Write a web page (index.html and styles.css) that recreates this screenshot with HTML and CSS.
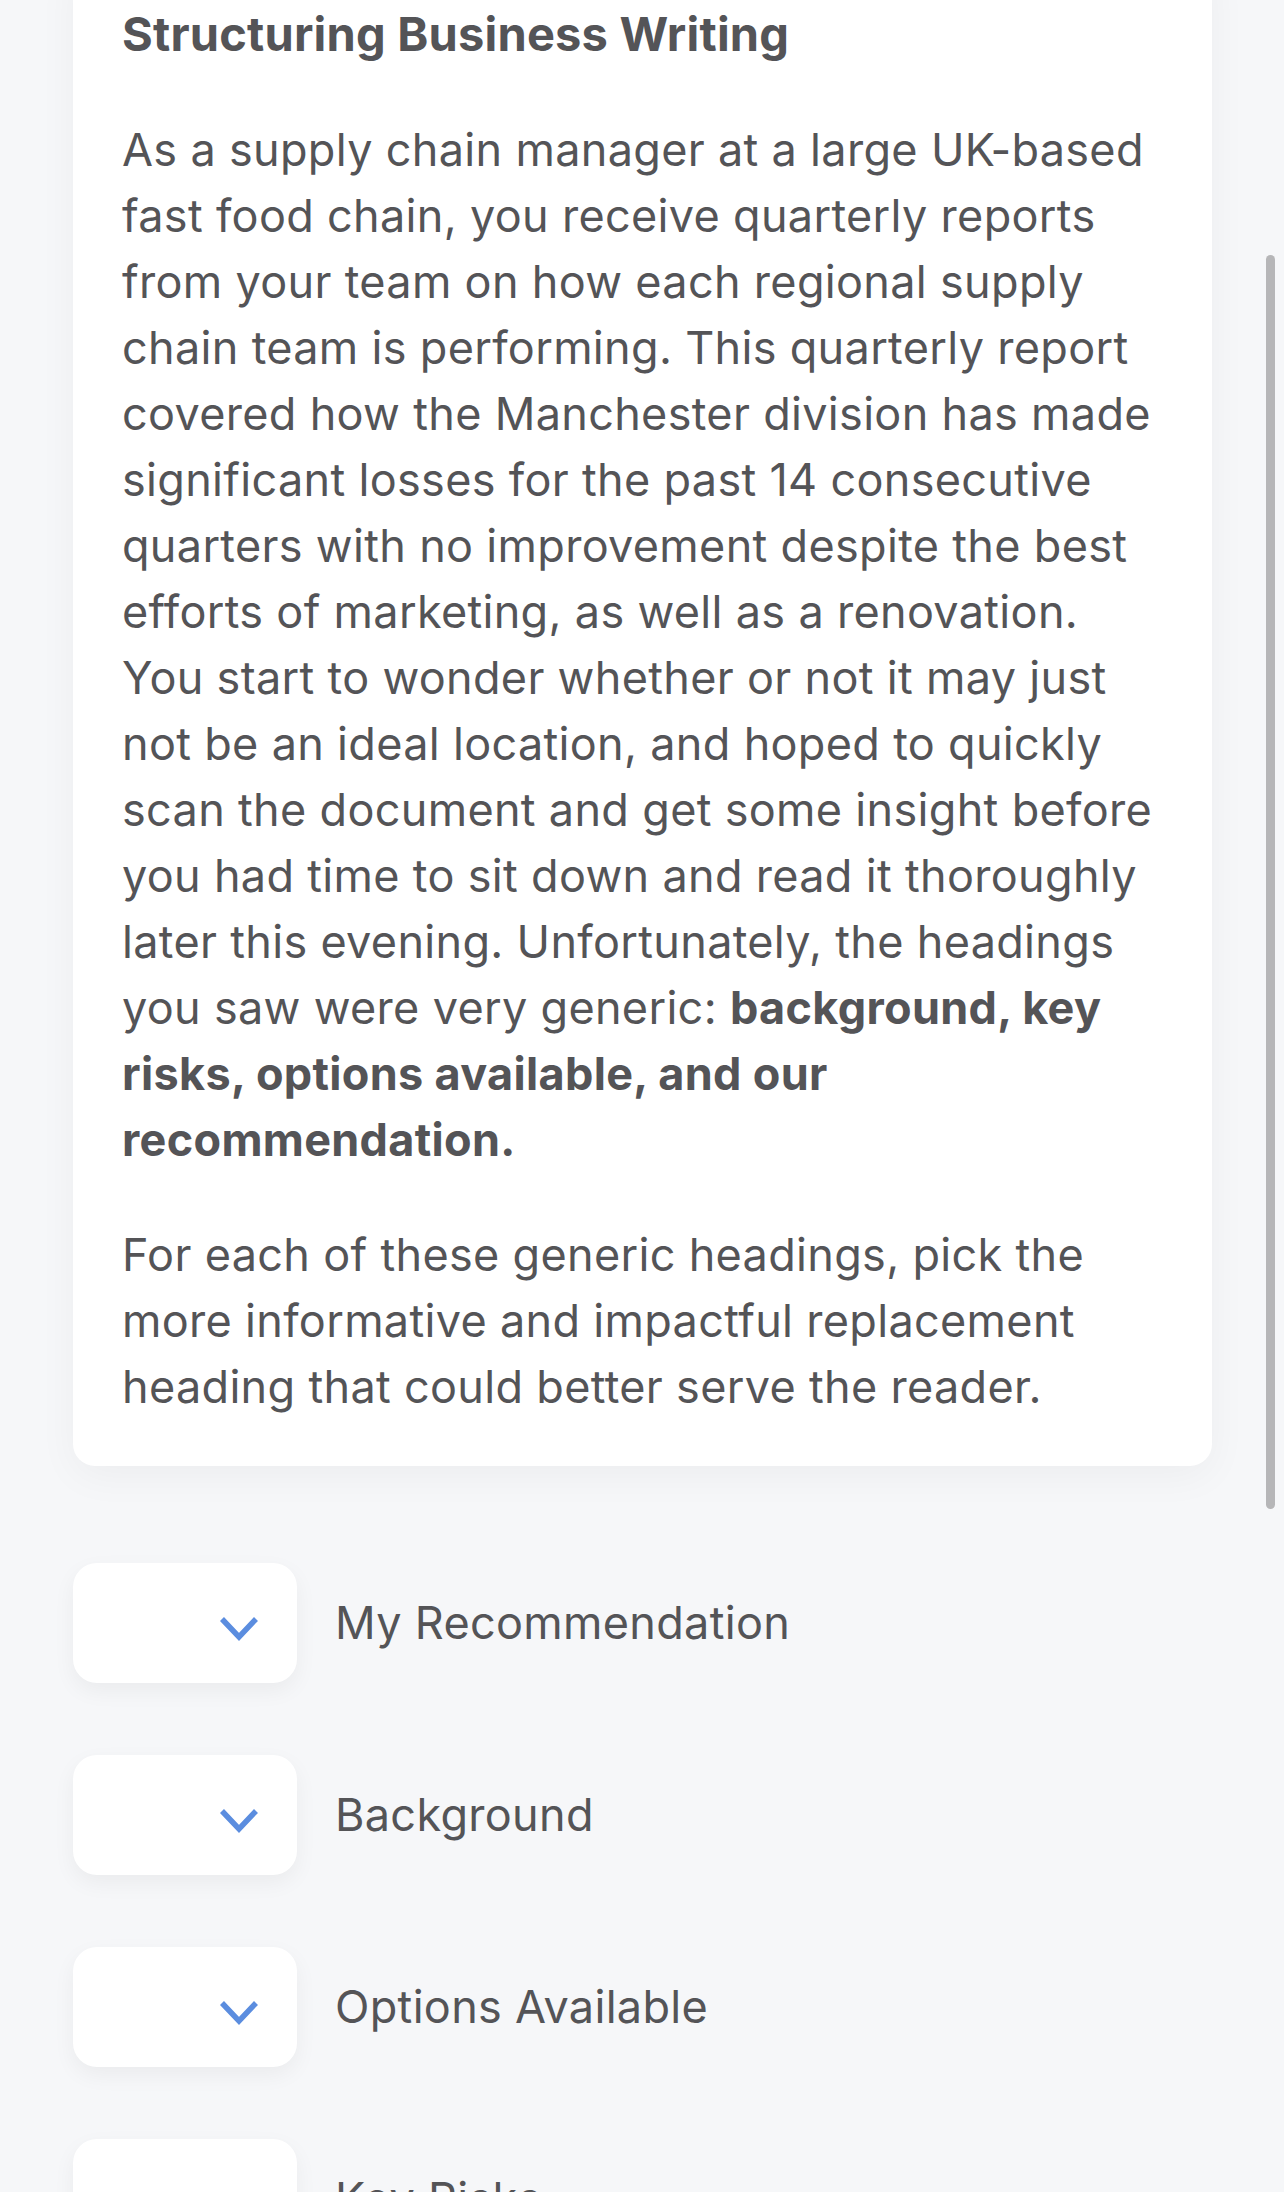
FILE: index.html
```html
<!DOCTYPE html>
<html lang="en">
<head>
<meta charset="utf-8">
<title>Structuring Business Writing</title>
<link rel="stylesheet" href="styles.css">
</head>
<body>
<main class="page">
  <section class="card">
    <h1 class="title">Structuring Business Writing</h1>
    <p class="body-text">As a supply chain manager at a large UK-based fast food chain, you receive quarterly reports from your team on how each regional supply chain team is performing. This quarterly report covered how the Manchester division has made significant losses for the past 14 consecutive quarters with no improvement despite the best efforts of marketing, as well as a renovation. You start to wonder whether or not it may just not be an ideal location, and hoped to quickly scan the document and get some insight before you had time to sit down and read it thoroughly later this evening. Unfortunately, the headings you saw were very generic: <strong>background, key risks, options available, and our recommendation.</strong></p>
    <p class="body-text">For each of these generic headings, pick the more informative and impactful replacement heading that could better serve the reader.</p>
  </section>

  <ul class="choices">
    <li class="choice">
      <div class="select"><svg class="chev" viewBox="0 0 38 26" width="38" height="26"><path d="M2 3 L19 21 L36 3" fill="none" stroke="#5b8ddf" stroke-width="5.5"/></svg></div>
      <span class="label">My Recommendation</span>
    </li>
    <li class="choice">
      <div class="select"><svg class="chev" viewBox="0 0 38 26" width="38" height="26"><path d="M2 3 L19 21 L36 3" fill="none" stroke="#5b8ddf" stroke-width="5.5"/></svg></div>
      <span class="label">Background</span>
    </li>
    <li class="choice">
      <div class="select"><svg class="chev" viewBox="0 0 38 26" width="38" height="26"><path d="M2 3 L19 21 L36 3" fill="none" stroke="#5b8ddf" stroke-width="5.5"/></svg></div>
      <span class="label">Options Available</span>
    </li>
    <li class="choice">
      <div class="select"><svg class="chev" viewBox="0 0 38 26" width="38" height="26"><path d="M2 3 L19 21 L36 3" fill="none" stroke="#5b8ddf" stroke-width="5.5"/></svg></div>
      <span class="label">Key Risks</span>
    </li>
  </ul>
</main>
<div class="scrollbar"></div>
</body>
</html>
```

FILE: styles.css
```css
html, body {
  margin: 0;
  padding: 0;
}
body {
  background: #f6f7f9;
  font-family: Inter, "Noto Sans", sans-serif;
  color: #545457;
  height: 2192px;
  overflow: hidden;
}
.page {
  padding: 0 72px 0 73px;
}
.card {
  background: #ffffff;
  margin-top: -40px;
  padding: 44px 49px 46px 49px;
  border-radius: 22px;
  box-shadow: 0 10px 40px rgba(0, 0, 0, 0.045);
}
.title {
  margin: 0 0 53px 0;
  font-size: 47px;
  line-height: 60px;
  font-weight: 700;
  letter-spacing: 0.2px;
}
.body-text {
  margin: 0;
  font-size: 45px;
  line-height: 66px;
  font-weight: 400;
  letter-spacing: 0.32px;
}
.body-text + .body-text {
  margin-top: 49px;
}
.body-text strong {
  font-weight: 700;
}
.choices {
  list-style: none;
  margin: 97px 0 0 0;
  padding: 0;
  display: flex;
  flex-direction: column;
  gap: 72px;
}
.choice {
  display: flex;
  align-items: center;
  gap: 38px;
}
.select {
  width: 224px;
  height: 120px;
  background: #ffffff;
  border-radius: 24px;
  box-shadow: 0 8px 22px rgba(0, 0, 0, 0.05);
  display: flex;
  align-items: center;
  justify-content: flex-end;
  padding-right: 39px;
  box-sizing: border-box;
}
.chev {
  display: block;
  margin-top: 12px;
}
.label {
  font-size: 45px;
  line-height: 66px;
  letter-spacing: 0.32px;
}
.scrollbar {
  position: absolute;
  left: 1266px;
  top: 255px;
  width: 9px;
  height: 1254px;
  border-radius: 5px;
  background: #b6b6b8;
}
```
